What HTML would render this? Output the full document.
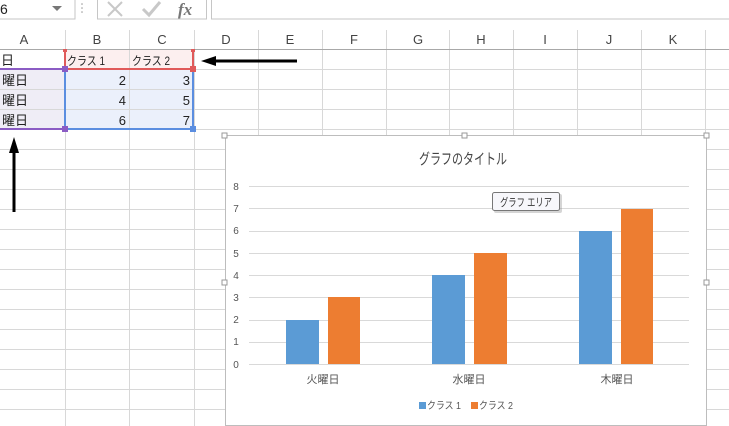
<!DOCTYPE html>
<html><head><meta charset="utf-8"><style>
body{margin:0;width:729px;height:426px;overflow:hidden;background:#fff;font-family:"Liberation Sans","Noto Sans CJK JP",sans-serif;}
</style></head><body>
<svg width="729" height="426" xmlns="http://www.w3.org/2000/svg" style="position:absolute;left:0;top:0;font-family:'Liberation Sans','Noto Sans CJK JP',sans-serif">
<rect x="-1" y="-1" width="76" height="20" fill="#fff" stroke="#c6c6c6"/>
<text x="0" y="14" font-size="14" fill="#222">6</text>
<path d="M52 6 L62 6 L57 11Z" fill="#777"/>
<circle cx="82" cy="4" r="0.8" fill="#999"/><circle cx="82" cy="8" r="0.8" fill="#999"/><circle cx="82" cy="12" r="0.8" fill="#999"/>
<rect x="97.5" y="-1" width="109" height="20" fill="#fff" stroke="#c6c6c6"/>
<path d="M108 2 L122 16 M122 2 L108 16" stroke="#c8c8c8" stroke-width="2"/>
<path d="M143 9 L149 15 L160 2" stroke="#c8c8c8" stroke-width="3" fill="none"/>
<text x="178" y="15" font-size="17" font-style="italic" font-weight="bold" font-family="Liberation Serif,serif" fill="#777">fx</text>
<rect x="211.5" y="-1" width="520" height="20" fill="#fff" stroke="#c6c6c6"/>
<rect x="0" y="69" width="65" height="60" fill="#efedf6"/>
<rect x="65" y="69" width="129" height="60" fill="#ebf0fb"/>
<rect x="65" y="49" width="129" height="20" fill="#fcefef"/>
<g stroke="#d8d8d8" stroke-width="1">
<path d="M0 69.5H729M0 89.5H729M0 109.5H729M0 129.5H729M0 149.5H729M0 169.5H729M0 189.5H729M0 209.5H729M0 229.5H729M0 249.5H729M0 269.5H729M0 289.5H729M0 309.5H729M0 329.5H729M0 349.5H729M0 369.5H729M0 389.5H729M0 409.5H729"/>
<path d="M65.5 30V426M129.5 30V426M194.5 30V426M258.5 30V426M322.5 30V426M386.5 30V426M449.5 30V426M513.5 30V426M577.5 30V426M641.5 30V426M705.5 30V426"/>
</g>
<path d="M0 49.5H729" stroke="#a8a8a8"/>
<g font-size="13" fill="#444" text-anchor="middle">
<text x="24" y="44">A</text><text x="97" y="44">B</text><text x="162" y="44">C</text><text x="226" y="44">D</text><text x="290" y="44">E</text><text x="354" y="44">F</text><text x="418" y="44">G</text><text x="481" y="44">H</text><text x="545" y="44">I</text><text x="609" y="44">J</text><text x="673" y="44">K</text>
</g>
<g font-size="13" fill="#222">
<text x="1" y="65">日</text><text x="2" y="85">曜日</text><text x="2" y="105">曜日</text><text x="2" y="125">曜日</text>
<text x="67" y="65" font-size="12" textLength="38" lengthAdjust="spacingAndGlyphs">クラス 1</text><text x="132" y="65" font-size="12" textLength="38" lengthAdjust="spacingAndGlyphs">クラス 2</text>
</g>
<g font-size="13" fill="#222" text-anchor="end">
<text x="126" y="85">2</text><text x="190" y="85">3</text><text x="126" y="105">4</text><text x="190" y="105">5</text><text x="126" y="125">6</text><text x="190" y="125">7</text>
</g>
<path d="M0 69H65V129H0" stroke="#8b5cc4" stroke-width="2" fill="none"/>
<path d="M65 69H193V129H65Z" stroke="#5b8ee0" stroke-width="2" fill="none"/>
<path d="M65 69H193M65 49V69M193 49V69" stroke="#e05a5a" stroke-width="2" fill="none"/>
<rect x="62" y="66" width="6" height="6" fill="#8b5cc4"/><rect x="62" y="126" width="6" height="6" fill="#8b5cc4"/>
<rect x="190" y="126" width="6" height="6" fill="#5b8ee0"/><rect x="190" y="66" width="6" height="6" fill="#e05a5a"/>
<rect x="63" y="49" width="4" height="3" fill="#e05a5a"/><rect x="191" y="49" width="4" height="3" fill="#e05a5a"/>
<path d="M213 61H297" stroke="#000" stroke-width="3"/><path d="M201 61L216 56V66Z" fill="#000"/>
<path d="M14 212V150" stroke="#000" stroke-width="3"/><path d="M14 137L9 153H19Z" fill="#000"/>
<rect x="225.5" y="135.5" width="481" height="290" fill="#fff" stroke="#bdbdbd"/>
<rect x="222" y="133" width="5" height="5" fill="#fff" stroke="#999"/><rect x="704" y="133" width="5" height="5" fill="#fff" stroke="#999"/>
<rect x="462" y="133" width="5" height="5" fill="#fff" stroke="#999"/>
<rect x="222" y="280" width="5" height="5" fill="#fff" stroke="#999"/><rect x="704" y="280" width="5" height="5" fill="#fff" stroke="#999"/>
<text x="419" y="164" font-size="15" fill="#444" textLength="88" lengthAdjust="spacingAndGlyphs">グラフのタイトル</text>
<g stroke="#d9d9d9"><path d="M249 186.5H689M249 208.5H689M249 231.5H689M249 253.5H689M249 275.5H689M249 297.5H689M249 320.5H689M249 342.5H689M249 364.5H689"/></g>
<g font-size="10" fill="#555" text-anchor="middle">
<text x="236" y="190">8</text><text x="236" y="212">7</text><text x="236" y="234">6</text><text x="236" y="257">5</text><text x="236" y="279">4</text><text x="236" y="301">3</text><text x="236" y="323">2</text><text x="236" y="345">1</text><text x="236" y="368">0</text>
</g>
<g fill="#5b9bd5"><rect x="286" y="320" width="33" height="44"/><rect x="432" y="275" width="33" height="89"/><rect x="579" y="231" width="33" height="133"/></g>
<g fill="#ed7d31"><rect x="328" y="297" width="32" height="67"/><rect x="474" y="253" width="33" height="111"/><rect x="621" y="209" width="32" height="155"/></g>
<g font-size="11" fill="#555" text-anchor="middle"><text x="323" y="383">火曜日</text><text x="469" y="383">水曜日</text><text x="617" y="383">木曜日</text></g>
<rect x="419" y="402" width="7" height="7" fill="#5b9bd5"/><text x="427" y="409" font-size="10" fill="#555" textLength="34" lengthAdjust="spacingAndGlyphs">クラス 1</text>
<rect x="471" y="402" width="7" height="7" fill="#ed7d31"/><text x="479" y="409" font-size="10" fill="#555" textLength="34" lengthAdjust="spacingAndGlyphs">クラス 2</text>
<rect x="494" y="194" width="68" height="19" rx="2" fill="#888" opacity="0.35"/>
<rect x="492.5" y="192.5" width="67" height="18" rx="2" fill="#f7f7fb" stroke="#777"/>
<text x="500" y="206" font-size="11" fill="#333" textLength="52" lengthAdjust="spacingAndGlyphs">グラフ エリア</text>
</svg>
</body></html>
